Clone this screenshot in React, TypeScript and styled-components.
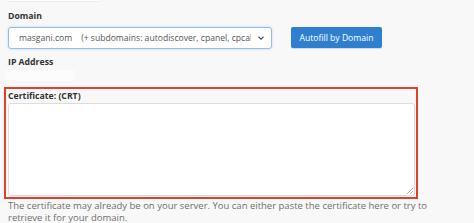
import React from "react";
import styled, { createGlobalStyle } from "styled-components";

const Global = createGlobalStyle`
  html, body { margin: 0; padding: 0; background: #f8f8f8; }
  body { font-family: "Open Sans", "Noto Sans", sans-serif; color: #333; }
  * { box-sizing: border-box; }
`;

const Page = styled.div`
  width: 474px;
  height: 223px;
  overflow: hidden;
  padding: 0 8px;
  display: flex;
  flex-direction: column;
`;

const TopStub = styled.div`
  width: 92px;
  height: 3px;
  background: #fff;
  border: 1px solid #ececec;
  border-top: none;
  border-radius: 0 0 2px 2px;
`;

const Label = styled.div<{ $mt: number }>`
  margin-top: ${(p) => p.$mt}px;
  font-size: 8.7px;
  font-weight: 700;
  line-height: 12px;
  color: #333;
`;

const Row = styled.div`
  display: flex;
  align-items: flex-start;
  margin-top: 5px;
`;

const Select = styled.div`
  width: 264px;
  height: 22px;
  background: #fff;
  border: 1px solid #95bde8;
  border-radius: 3px;
  box-shadow: 0 0 3px rgba(102, 160, 230, 0.35);
  display: flex;
  align-items: center;
  padding: 0 6px 0 10px;
  font-size: 8.6px;
  color: #555;
  white-space: nowrap;
  overflow: hidden;
`;

const SelectText = styled.span`
  flex: 1;
  min-width: 0;
  overflow: hidden;
  white-space: pre;
`;

const Chevron = styled.svg`
  width: 8px;
  height: 8px;
  margin-left: 6px;
  flex: none;
`;

const Button = styled.div`
  margin-left: 19px;
  height: 21px;
  width: 91px;
  background: #2e7fcf;
  color: #fff;
  border-radius: 2px;
  font-size: 8.6px;
  display: flex;
  align-items: center;
  justify-content: center;
  box-shadow: 0 1px 1px rgba(0, 0, 0, 0.15);
`;

const IpBox = styled.div`
  margin-top: 2px;
  margin-left: -3px;
  width: 70px;
  height: 15px;
  background: #fcfcfc;
  border-radius: 2px;
`;

const Highlight = styled.div`
  margin-top: 6px;
  margin-left: -4px;
  width: 414px;
  border: 2px solid #e2402e;
  padding: 0 1px 1px 2px;
  display: flex;
  flex-direction: column;
`;

const CertLabel = styled.div`
  font-size: 8.7px;
  font-weight: 700;
  line-height: 12px;
  color: #333;
  padding-top: 1px;
`;

const TextArea = styled.div`
  margin-top: 1px;
  height: 93px;
  background: #fff;
  border: 1px solid #dcdcdc;
  border-radius: 3px;
  position: relative;
`;

const Grip = styled.svg`
  position: absolute;
  right: 1px;
  bottom: 1px;
  width: 6px;
  height: 6px;
`;

const Help = styled.div`
  margin-top: 1px;
  font-size: 9.5px;
  line-height: 11.5px;
  color: #6f6f6f;
  width: 440px;
`;

export default function App() {
  return (
    <>
      <Global />
      <Page>
        <TopStub />
        <Label $mt={8}>Domain</Label>
        <Row>
          <Select>
            <SelectText>masgani.com    (+ subdomains: autodiscover, cpanel, cpcal</SelectText>
            <Chevron viewBox="0 0 8 8">
              <path d="M1.5 2.8 L4 5.2 L6.5 2.8" fill="none" stroke="#555" strokeWidth="1.3" />
            </Chevron>
          </Select>
          <Button>Autofill by Domain</Button>
        </Row>
        <Label $mt={7}>IP Address</Label>
        <IpBox />
        <Highlight>
          <CertLabel>Certificate: (CRT)</CertLabel>
          <TextArea>
            <Grip viewBox="0 0 6 6">
              <path d="M0 6 L6 0 M3 6 L6 3" stroke="#999" strokeWidth="0.8" />
            </Grip>
          </TextArea>
        </Highlight>
        <Help>
          The certificate may already be on your server. You can either paste the certificate here or try to
          <br />
          retrieve it for your domain.
        </Help>
      </Page>
    </>
  );
}
